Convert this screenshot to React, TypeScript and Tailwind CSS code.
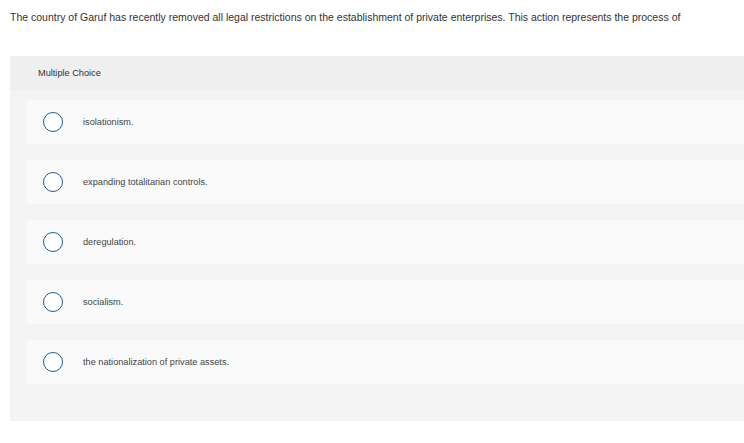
import React from "react";

const options = [
  "isolationism.",
  "expanding totalitarian controls.",
  "deregulation.",
  "socialism.",
  "the nationalization of private assets.",
];

export default function App() {
  return (
    <div
      className="w-[744px] h-[443px] bg-white overflow-hidden"
      style={{ fontFamily: "'Liberation Sans', Arial, sans-serif" }}
    >
      <p className="pl-[10px] pt-[9px] text-[10.5px] leading-[16px] text-[#333333]">
        The country of Garuf has recently removed all legal restrictions on the establishment of private enterprises. This action represents the process of
      </p>
      <div className="ml-[10px] mt-[31px] bg-[#f4f4f4] rounded-l-[2px] pb-[37px]">
        <div className="h-[34px] bg-[#efefef] rounded-tl-[2px] pl-[28px] pt-[2px] flex items-center text-[9.2px] text-[#333333]">
          Multiple Choice
        </div>
        <div className="pt-[10px] pl-[17px] flex flex-col gap-[16px]">
          {options.map((o) => (
            <div key={o} className="h-[44px] bg-[#fafafa] flex items-center pl-[16px]">
              <span className="w-[20px] h-[20px] rounded-full border-[1.5px] border-[#1d5b94] bg-white shrink-0" />
              <span className="ml-[20px] pt-[2px] text-[9.2px] text-[#444444]">{o}</span>
            </div>
          ))}
        </div>
      </div>
    </div>
  );
}
